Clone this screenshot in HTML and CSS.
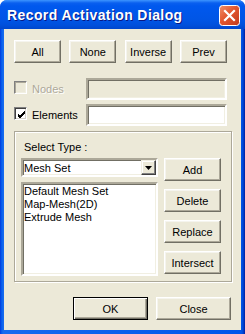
FILE: index.html
```html
<!DOCTYPE html>
<html lang="en">
<head>
    <meta charset="UTF-8">
    <title>Record Activation Dialog</title>
    <link rel="stylesheet" href="styles.css">
</head>
<body>

<div class="window">
    <div class="titlebar">
        <span class="title">Record Activation Dialog</span>
        <span class="close-btn">
            <svg width="21" height="21" viewBox="0 0 21 21">
                <defs>
                    <linearGradient id="closeGrad" x1="0" y1="0" x2="1" y2="1">
                        <stop offset="0" stop-color="#f0906c"/>
                        <stop offset="0.45" stop-color="#e2572f"/>
                        <stop offset="1" stop-color="#c1391c"/>
                    </linearGradient>
                </defs>
                <rect x="0.5" y="0.5" width="20" height="20" rx="3" fill="url(#closeGrad)" stroke="#fff"/>
                <path d="M6 6 L15 15 M15 6 L6 15" stroke="#fff" stroke-width="2.2" stroke-linecap="square"/>
            </svg>
        </span>
    </div>

    <div class="client">
        <div class="btn-row">
            <button class="btn">All</button>
            <button class="btn">None</button>
            <button class="btn">Inverse</button>
            <button class="btn">Prev</button>
        </div>

        <div class="field-row disabled">
            <span class="check"></span>
            <span class="field-label">Nodes</span>
            <span class="textbox"></span>
        </div>
        <div class="field-row">
            <span class="check checked">
                <svg width="9" height="9" viewBox="0 0 9 9">
                    <path d="M1 4 L3 6 L8 1 M1 5 L3 7 L8 2 M1 6 L3 8 L8 3" stroke="#000" stroke-width="1" fill="none"/>
                </svg>
            </span>
            <span class="field-label">Elements</span>
            <span class="textbox"></span>
        </div>

        <div class="group">
            <div class="group-label">Select Type :</div>
            <div class="group-body">
                <div class="left-col">
                    <div class="combo">
                        <span class="combo-text">Mesh Set</span>
                        <span class="combo-arrow">
                            <svg width="7" height="4" viewBox="0 0 7 4"><path d="M0 0 H7 L3.5 4 Z" fill="#000"/></svg>
                        </span>
                    </div>
                    <div class="listbox">
                        <div class="list-item">Default Mesh Set</div>
                        <div class="list-item">Map-Mesh(2D)</div>
                        <div class="list-item">Extrude Mesh</div>
                    </div>
                </div>
                <div class="right-col">
                    <button class="btn side-btn">Add</button>
                    <button class="btn side-btn">Delete</button>
                    <button class="btn side-btn">Replace</button>
                    <button class="btn side-btn">Intersect</button>
                </div>
            </div>
        </div>

        <div class="footer">
            <button class="btn footer-btn default">OK</button>
            <button class="btn footer-btn">Close</button>
        </div>
    </div>
</div>

</body>
</html>
```

FILE: styles.css
```css
html, body {
    margin: 0;
    padding: 0;
    background: #fff;
}
body {
    font-family: Tahoma, "Liberation Sans", Arial, sans-serif;
    font-size: 11px;
    color: #000;
}
.window {
    width: 245px;
    height: 334px;
    display: flex;
    flex-direction: column;
    background: linear-gradient(to right, #0831d9 0, #0055ea 1px, #166aee 3px, #0055ea 241px, #0046d6 243px, #001ea0 245px);
    border-radius: 7px 7px 0 0;
    overflow: hidden;
}
.titlebar {
    height: 29px;
    flex: none;
    display: flex;
    align-items: center;
    justify-content: space-between;
    padding: 0 5px 0 7px;
    background: linear-gradient(#3d95ff 0, #0a5fef 3px, #0058ee 6px, #0055e5 20px, #0050dc 25px, #0046cc 29px);
}
.title {
    color: #fff;
    font-family: "Liberation Sans", Arial, sans-serif;
    font-weight: bold;
    font-size: 14px;
    text-shadow: 1px 1px 0 #0a1883;
    letter-spacing: 0.4px;
}
.close-btn {
    display: flex;
    margin-top: 1px;
}
.client {
    flex: 1;
    margin: 0 4px 4px 4px;
    background: #ece9d8;
    display: flex;
    flex-direction: column;
}
.btn {
    font-family: Tahoma, "Liberation Sans", Arial, sans-serif;
    font-size: 11px;
    color: #000;
    background: #ece9d8;
    padding: 0;
    margin: 0;
    height: 23px;
    border: 1px solid;
    border-color: #fff #716f64 #716f64 #fff;
    box-shadow: inset -1px -1px 0 #aca899, inset 1px 1px 0 #f5f4ee;
}
.btn-row {
    display: flex;
    justify-content: space-between;
    width: 213px;
    margin: 11px 0 0 10px;
}
.btn-row .btn {
    width: 47px;
}
.field-row {
    display: flex;
    align-items: center;
    margin: 0 0 0 10px;
    height: 22px;
}
.btn-row + .field-row {
    margin-top: 15px;
}
.field-row + .field-row {
    margin-top: 4px;
}
.check {
    width: 11px;
    height: 11px;
    flex: none;
    background: #fff;
    border: 1px solid;
    border-color: #808080 #fff #fff #808080;
    box-shadow: inset 1px 1px 0 #404040, inset -1px -1px 0 #d4d0c8;
    display: flex;
    align-items: center;
    justify-content: center;
    margin-top: -3px;
}
.check svg {
    margin: 1px 0 0 1px;
}
.field-label {
    margin-left: 5px;
    width: 54px;
}
.textbox {
    width: 137px;
    height: 18px;
    background: #fff;
    border: 2px solid;
    border-color: #aca899 #fff #fff #aca899;
    box-shadow: inset 1px 1px 0 #716f64, inset -1px -1px 0 #f1efe2;
}
.disabled .check {
    background: #ece9d8;
    box-shadow: inset 1px 1px 0 #aca899, inset -1px -1px 0 #f1efe2;
}
.disabled .field-label {
    color: #aca899;
    text-shadow: 1px 1px 0 #fff;
}
.disabled .textbox {
    background: #ece9d8;
}
.group {
    margin: 5px 0 0 10px;
    width: 218px;
    height: 151px;
    border: 1px solid #aca899;
    box-shadow: inset 1px 1px 0 #fff, 1px 1px 0 #fff;
    box-sizing: border-box;
    padding: 9px 0 0 6px;
}
.group-label {
    margin-left: 3px;
    height: 17px;
}
.group-body {
    display: flex;
    gap: 6px;
}
.left-col {
    display: flex;
    flex-direction: column;
    gap: 5px;
    width: 137px;
}
.combo {
    height: 15px;
    background: #fff;
    border: 2px solid;
    border-color: #aca899 #fff #fff #aca899;
    box-shadow: inset 1px 1px 0 #716f64, inset -1px -1px 0 #f1efe2;
    display: flex;
    align-items: center;
    justify-content: space-between;
}
.combo-text {
    padding-left: 1px;
}
.combo-arrow {
    width: 13px;
    height: 13px;
    background: #ece9d8;
    border: 1px solid;
    border-color: #f1efe2 #404040 #404040 #f1efe2;
    box-shadow: inset -1px -1px 0 #808080, inset 1px 1px 0 #fff;
    display: flex;
    align-items: center;
    justify-content: center;
}
.listbox {
    height: 89px;
    background: #fff;
    border: 2px solid;
    border-color: #aca899 #fff #fff #aca899;
    box-shadow: inset 1px 1px 0 #716f64, inset -1px -1px 0 #f1efe2;
    padding: 1px 0 0 1px;
}
.list-item {
    line-height: 13px;
    height: 13px;
}
.right-col {
    display: flex;
    flex-direction: column;
    gap: 8px;
}
.side-btn {
    width: 57px;
}
.footer {
    display: flex;
    justify-content: flex-end;
    gap: 8px;
    margin: 15px 10px 0 0;
}
.footer-btn {
    width: 75px;
    height: 23px;
}
.footer-btn.default {
    border: 1px solid #000;
    box-shadow: inset 1px 1px 0 #fff, inset -1px -1px 0 #716f64, inset -2px -2px 0 #aca899;
}
```
